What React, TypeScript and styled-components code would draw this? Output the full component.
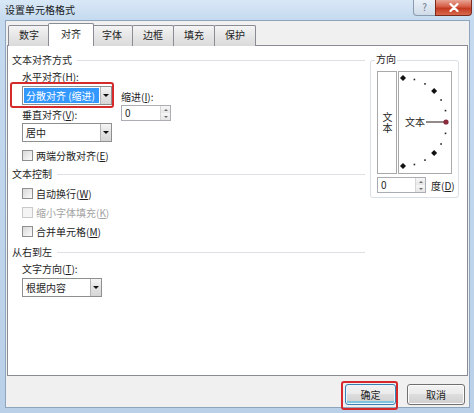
import React from 'react';
import styled, {createGlobalStyle} from 'styled-components';

const GlobalStyle = createGlobalStyle`
  html, body { margin: 0; padding: 0; background: #fff; }
  body {
    font-family: "Noto Sans CJK SC", "Liberation Sans", sans-serif;
    font-size: 10px;
    color: #1e1e1e;
  }
  * { box-sizing: border-box; }
`;

const Window = styled.div`
  width: 474px;
  height: 413px;
  display: flex;
  flex-direction: column;
  padding: 0 4px 5px 5px;
  background: linear-gradient(180deg, #d8e8f7 0, #c5daef 20px, #b9d0e8 100%);
`;

const TitleBar = styled.div`
  height: 20px;
  display: flex;
  justify-content: space-between;
  align-items: flex-start;
  .title { padding-top: 3px; line-height: 14px; color: #1a1a1a; }
`;

const CaptionButtons = styled.div`
  display: flex;
  margin-right: -2px;
`;

const HelpButton = styled.div`
  width: 22px;
  height: 16px;
  border: 1px solid #8a9bb0;
  border-top: none;
  border-right: none;
  border-radius: 0 0 0 4px;
  background: linear-gradient(180deg, #e9f0f8, #cfdbe8);
  color: #6b7684;
  font-size: 10px;
  line-height: 14px;
  text-align: center;
`;

const CloseButton = styled.div`
  width: 37px;
  height: 16px;
  border: 1px solid #7b2a1c;
  border-top: none;
  border-radius: 0 0 4px 0;
  background: linear-gradient(180deg, #e8a596 0, #d55b44 45%, #c23a20 55%, #d76a4e 100%);
  display: flex;
  align-items: center;
  justify-content: center;
`;

const Body = styled.div`
  flex: 1;
  display: flex;
  flex-direction: column;
  background: #f0f0f0;
  border: 1px solid #8fa5bd;
  padding: 2px 1px 0 1px;
`;

const TabStrip = styled.div`
  height: 23px;
  display: flex;
  align-items: flex-end;
  padding-left: 1px;
  margin-bottom: -1px;
  position: relative;
  z-index: 1;
`;

const Tab = styled.div<{$active?: boolean}>`
  height: ${p => (p.$active ? 23 : 21)}px;
  padding: 0 ${p => (p.$active ? 12 : 10)}px;
  margin: 0 ${p => (p.$active ? -2 : 0)}px 0 ${p => (p.$active ? -2 : -1)}px;
  border: 1px solid #898c95;
  border-bottom: none;
  border-radius: 2px 2px 0 0;
  line-height: ${p => (p.$active ? 20 : 18)}px;
  background: ${p => (p.$active ? '#fff' : 'linear-gradient(180deg, #f4f4f4, #e6e6e6 50%, #dadada)')};
  position: relative;
  z-index: ${p => (p.$active ? 2 : 0)};
  &:first-child { margin-left: 0; }
`;

const Panel = styled.div`
  height: 331px;
  background: #fff;
  border: 1px solid #898c95;
  display: flex;
  align-items: flex-start;
`;

const LeftColumn = styled.div`
  width: 353px;
  margin: 6px 0 0 4px;
  display: flex;
  flex-direction: column;
`;

const SectionHeader = styled.div<{$top: number}>`
  height: 16px;
  line-height: 16px;
  margin-top: ${p => p.$top}px;
  display: flex;
  align-items: center;
  &::after {
    content: '';
    flex: 1;
    margin-left: 5px;
    border-top: 1px solid #dde1e6;
  }
`;

const AlignRow = styled.div`
  display: flex;
  margin-top: 1px;
  padding-left: 10px;
`;

const FieldColumn = styled.div<{$top?: number; $gap?: number}>`
  display: flex;
  flex-direction: column;
  margin-top: ${p => p.$top ?? 0}px;
  margin-left: ${p => p.$gap ?? 0}px;
`;

const Label = styled.div<{$top?: number}>`
  height: 16px;
  line-height: 16px;
  margin-top: ${p => p.$top ?? 0}px;
  white-space: nowrap;
`;

const Annotated = styled.div<{$inset: string}>`
  position: relative;
  &::after {
    content: '';
    position: absolute;
    inset: ${p => p.$inset};
    border: 2px solid #d52a2c;
    border-radius: 3px;
    pointer-events: none;
  }
`;

const SelectBox = styled.div<{$width: number; $top?: number}>`
  width: ${p => p.$width}px;
  height: 19px;
  margin-top: ${p => p.$top ?? 0}px;
  border: 1px solid #8e8f8f;
  background: #fff;
  display: flex;
`;

const SelectValue = styled.div<{$selected?: boolean}>`
  flex: 1;
  margin: 1px;
  padding-left: 2px;
  line-height: 15px;
  white-space: nowrap;
  background: ${p => (p.$selected ? '#3399ff' : 'transparent')};
  color: ${p => (p.$selected ? '#fff' : '#1e1e1e')};
`;

const SelectArrow = styled.div`
  width: 11px;
  border-left: 1px solid #b5b5b5;
  background: linear-gradient(180deg, #f5f5f5, #e3e3e3 50%, #d6d6d6);
  display: flex;
  align-items: center;
  justify-content: center;
  &::before {
    content: '';
    border-left: 3px solid transparent;
    border-right: 3px solid transparent;
    border-top: 3px solid #111;
  }
`;

const SpinBox = styled.div<{$width: number}>`
  width: ${p => p.$width}px;
  height: 16px;
  border: 1px solid #abadb3;
  background: #fff;
  display: flex;
  .value { flex: 1; padding-left: 3px; line-height: 14px; }
`;

const SpinButtons = styled.div`
  width: 10px;
  display: flex;
  flex-direction: column;
  border-left: 1px solid #d6d6d6;
  span {
    flex: 1;
    display: flex;
    align-items: center;
    justify-content: center;
    background: linear-gradient(180deg, #f7f7f7, #e6e6e6);
  }
  span:first-child::before {
    content: '';
    border-left: 2px solid transparent;
    border-right: 2px solid transparent;
    border-bottom: 2px solid #6d6d6d;
  }
  span:last-child::before {
    content: '';
    border-left: 2px solid transparent;
    border-right: 2px solid transparent;
    border-top: 2px solid #6d6d6d;
  }
`;

const CheckRow = styled.div<{$top: number; $disabled?: boolean}>`
  height: 16px;
  margin-top: ${p => p.$top}px;
  display: flex;
  align-items: center;
  color: ${p => (p.$disabled ? '#a3a3a3' : '#1e1e1e')};
  &::before {
    content: '';
    width: 9px;
    height: 9px;
    margin-right: 3px;
    border: 1px solid ${p => (p.$disabled ? '#c9c9c9' : '#8f8f8f')};
    background: ${p => (p.$disabled ? '#f4f4f4' : 'linear-gradient(135deg, #d9d9d9, #fbfbfb)')};
  }
`;

const Indented = styled.div`
  display: flex;
  flex-direction: column;
  padding-left: 10px;
`;

const GroupBox = styled.div`
  width: 89px;
  height: 138px;
  margin: 14px 0 0 5px;
  padding: 10px 0 0 6px;
  border: 1px solid #d8e0e6;
  border-radius: 3px;
  position: relative;
  .legend {
    position: absolute;
    top: -9px;
    left: 4px;
    padding: 0 1px;
    background: #fff;
    line-height: 14px;
  }
`;

const OrientationRow = styled.div`
  display: flex;
  gap: 1px;
  height: 103px;
`;

const VerticalTextBox = styled.div`
  width: 20px;
  border: 1px solid #a9a9a9;
  display: flex;
  align-items: center;
  justify-content: center;
  span {
    writing-mode: vertical-rl;
    text-orientation: upright;
    letter-spacing: 1px;
    line-height: 12px;
  }
`;

const ArcBox = styled.div`
  width: 54px;
  border: 1px solid #a9a9a9;
  svg { display: block; }
`;

const DegreeRow = styled.div`
  display: flex;
  align-items: center;
  margin-top: 3px;
  gap: 5px;
`;

const Footer = styled.div`
  flex: 1;
  display: flex;
  justify-content: flex-end;
  align-items: flex-start;
  gap: 11px;
  padding: 8px 3px 0 0;
`;

const Button = styled.div<{$width: number; $default?: boolean}>`
  width: ${p => p.$width}px;
  height: 21px;
  border: 1px solid ${p => (p.$default ? '#3c7fb1' : '#707070')};
  border-radius: 3px;
  line-height: 19px;
  text-align: center;
  background: linear-gradient(180deg, #f2f2f2, #ebebeb 45%, #dddddd 50%, #cfcfcf);
  box-shadow: ${p => (p.$default ? 'inset 0 0 0 1px #e8f6fd, inset 0 -2px 0 1px #7fc4dc' : 'inset 0 0 0 1px #fcfcfc')};
`;

const arcDots = Array.from({length: 13}, (_, i) => {
    const deg = 90 - i * 15;
    const rad = (deg * Math.PI) / 180;
    return {deg, x: 4 + 44 * Math.cos(rad), y: 50 - 44 * Math.sin(rad)};
});

const Mn = ({children}: {children: string}) => <u>{children}</u>;

const App = () => {
    const tabs = ['数字', '对齐', '字体', '边框', '填充', '保护'];
    return (
        <>
            <GlobalStyle />
            <Window>
                <TitleBar>
                    <span className='title'>设置单元格格式</span>
                    <CaptionButtons>
                        <HelpButton>?</HelpButton>
                        <CloseButton>
                            <svg width='10' height='9' viewBox='0 0 10 9'>
                                <path d='M1.5 1 L8.5 8 M8.5 1 L1.5 8' stroke='#fff' strokeWidth='2.2' strokeLinecap='round' />
                            </svg>
                        </CloseButton>
                    </CaptionButtons>
                </TitleBar>
                <Body>
                    <TabStrip>
                        {tabs.map(t => (
                            <Tab key={t} $active={t === '对齐'}>{t}</Tab>
                        ))}
                    </TabStrip>
                    <Panel>
                        <LeftColumn>
                            <SectionHeader $top={0}>文本对齐方式</SectionHeader>
                            <AlignRow>
                                <FieldColumn>
                                    <Label>水平对齐(<Mn>H</Mn>):</Label>
                                    <Annotated $inset='-3px -2px -3px -12px'>
                                        <SelectBox $width={90} $top={1}>
                                            <SelectValue $selected>分散对齐 (缩进)</SelectValue>
                                            <SelectArrow />
                                        </SelectBox>
                                    </Annotated>
                                    <Label $top={2}>垂直对齐(<Mn>V</Mn>):</Label>
                                    <SelectBox $width={90}>
                                        <SelectValue>居中</SelectValue>
                                        <SelectArrow />
                                    </SelectBox>
                                    <CheckRow $top={5}>两端分散对齐(<Mn>E</Mn>)</CheckRow>
                                </FieldColumn>
                                <FieldColumn $top={20} $gap={9}>
                                    <Label>缩进(<Mn>I</Mn>):</Label>
                                    <SpinBox $width={50}>
                                        <span className='value'>0</span>
                                        <SpinButtons><span /><span /></SpinButtons>
                                    </SpinBox>
                                </FieldColumn>
                            </AlignRow>
                            <SectionHeader $top={3}>文本控制</SectionHeader>
                            <Indented>
                                <CheckRow $top={3}>自动换行(<Mn>W</Mn>)</CheckRow>
                                <CheckRow $top={3} $disabled>缩小字体填充(<Mn>K</Mn>)</CheckRow>
                                <CheckRow $top={3}>合并单元格(<Mn>M</Mn>)</CheckRow>
                            </Indented>
                            <SectionHeader $top={5}>从右到左</SectionHeader>
                            <Indented>
                                <Label $top={1}>文字方向(<Mn>T</Mn>):</Label>
                                <SelectBox $width={80} $top={1}>
                                    <SelectValue>根据内容</SelectValue>
                                    <SelectArrow />
                                </SelectBox>
                            </Indented>
                        </LeftColumn>
                        <GroupBox>
                            <span className='legend'>方向</span>
                            <OrientationRow>
                                <VerticalTextBox>
                                    <span>文本</span>
                                </VerticalTextBox>
                                <ArcBox>
                                    <svg width='52' height='101' viewBox='0 0 52 101'>
                                        <line x1='27' y1='50' x2='47' y2='50' stroke='#4a3b3b' strokeWidth='1.2' />
                                        {arcDots.map(d =>
                                            d.deg === 0 ? (
                                                <circle key={d.deg} cx={d.x - 1} cy={d.y} r='2.6' fill='#8a2b3c' />
                                            ) : d.deg % 45 === 0 ? (
                                                <polygon
                                                    key={d.deg}
                                                    points={`${d.x},${d.y - 3} ${d.x + 3},${d.y} ${d.x},${d.y + 3} ${d.x - 3},${d.y}`}
                                                    fill='#111'
                                                />
                                            ) : (
                                                <rect key={d.deg} x={d.x - 0.8} y={d.y - 0.8} width='1.6' height='1.6' fill='#222' />
                                            )
                                        )}
                                        <text x='6' y='54' fontSize='10' fill='#1e1e1e'
                                              fontFamily='"Noto Sans CJK SC", sans-serif'>文本</text>
                                    </svg>
                                </ArcBox>
                            </OrientationRow>
                            <DegreeRow>
                                <SpinBox $width={49}>
                                    <span className='value'>0</span>
                                    <SpinButtons><span /><span /></SpinButtons>
                                </SpinBox>
                                <span>度(<Mn>D</Mn>)</span>
                            </DegreeRow>
                        </GroupBox>
                    </Panel>
                    <Footer>
                        <Annotated $inset='-3px -2px -5px -4px'>
                            <Button $width={51} $default>确定</Button>
                        </Annotated>
                        <Button $width={58}>取消</Button>
                    </Footer>
                </Body>
            </Window>
        </>
    );
};

export default App;
